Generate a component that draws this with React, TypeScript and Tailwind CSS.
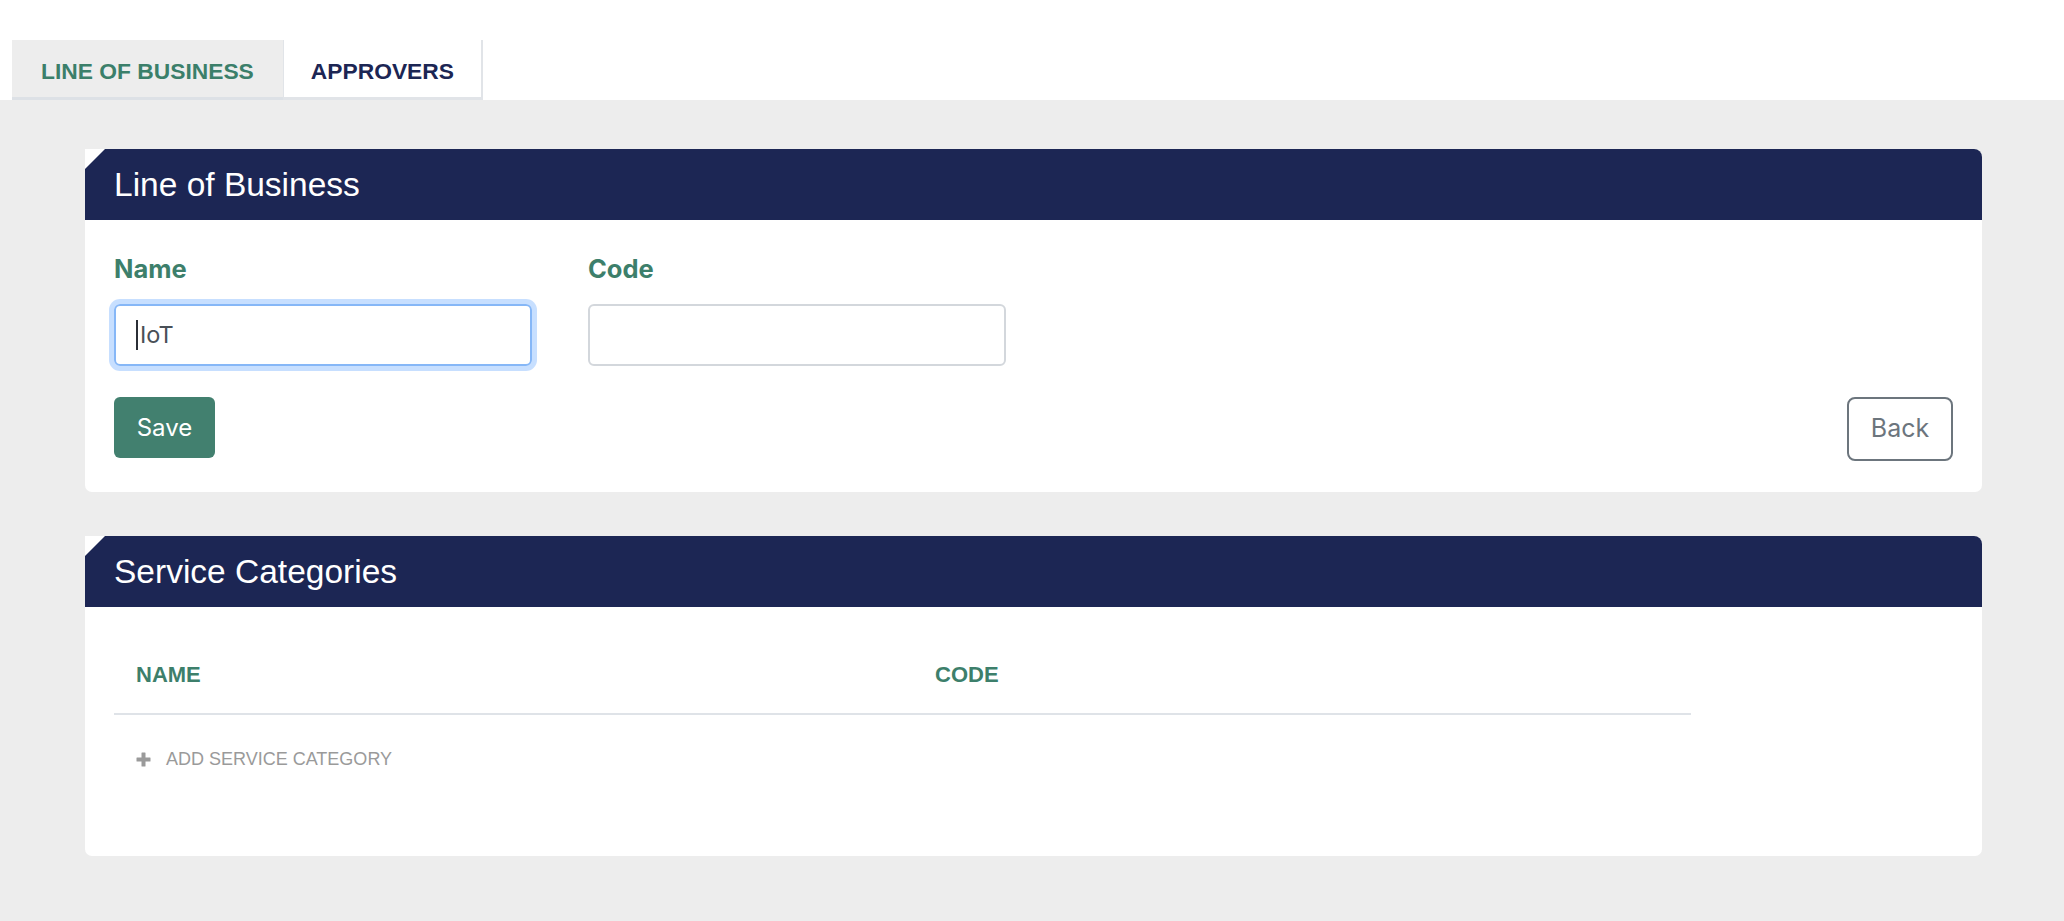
import React from "react";

const arial = "font-['Liberation_Sans',Arial,Helvetica,sans-serif]";
const sys = "font-['Inter','Noto_Sans',Arial,sans-serif]";

function CardHeader({ title }: { title: string }) {
  return (
    <div className="h-[71px] bg-[#1c2654] rounded-tr-[8px] [clip-path:polygon(20px_0,100%_0,100%_100%,0_100%,0_20px)] flex items-center pl-[29px]">
      <h2 className={`${arial} text-white text-[33.5px] leading-none`}>{title}</h2>
    </div>
  );
}

export default function App() {
  return (
    <div className="min-h-[921px] bg-[#ededed]">
      <div className="bg-white pt-[40px] pl-[12px] flex">
        <div
          className={`${arial} bg-[#ededed] text-[#3b7f6a] font-bold text-[22.8px] leading-[26px] px-[29px] pt-[18px] pb-[13px] border-b-[3px] border-[#dde1e6]`}
        >
          LINE OF BUSINESS
        </div>
        <div
          className={`${arial} bg-white text-[#1c2654] font-bold text-[22.8px] leading-[26px] px-[27px] pt-[18px] pb-[13px] border-l border-r-2 border-b-[3px] border-[#e1e4e8]`}
        >
          APPROVERS
        </div>
      </div>

      <div className="ml-[85px] mr-[82px] pt-[49px] pb-[64px] flex flex-col gap-[44px]">
        <section className="bg-white rounded-b-[7px] rounded-tr-[8px]">
          <CardHeader title="Line of Business" />
          <div className="px-[29px] pt-[34px] pb-[31px]">
            <div className="flex gap-[56px]">
              <div className="w-[418px]">
                <label className={`${sys} block text-[#3d7f6b] font-bold text-[25.5px] leading-[30px] mb-[20px]`}>
                  Name
                </label>
                <div className="h-[62px] rounded-[6px] border-2 border-[#86b7f7] shadow-[0_0_0_5px_rgba(0,110,255,0.22)] flex items-center pl-[20px]">
                  <span className="w-[2px] h-[30px] bg-[#2b2f36] mr-[2px]" />
                  <span className={`${sys} text-[23.5px] text-[#495057]`}>IoT</span>
                </div>
              </div>
              <div className="w-[418px]">
                <label className={`${sys} block text-[#3d7f6b] font-bold text-[25.5px] leading-[30px] mb-[20px]`}>
                  Code
                </label>
                <div className="h-[62px] rounded-[6px] border-2 border-[#d3d7dc] bg-white" />
              </div>
            </div>
            <div className="mt-[31px] flex justify-between items-start">
              <button className={`${sys} h-[61px] w-[101px] rounded-[6px] bg-[#42806f] text-white text-[24px]`}>
                Save
              </button>
              <button
                className={`${sys} h-[64px] w-[106px] rounded-[8px] border-2 border-[#6c757d] bg-white text-[#6c757d] text-[25px]`}
              >
                Back
              </button>
            </div>
          </div>
        </section>

        <section className="bg-white rounded-b-[7px] rounded-tr-[8px]">
          <CardHeader title="Service Categories" />
          <div className="pl-[29px] pt-[36px] pb-[86px]">
            <table className="w-[1577px] border-collapse">
              <thead>
                <tr className="border-b-2 border-[#dfe3e8]">
                  <th
                    className={`${arial} w-[799px] text-left pl-[22px] pt-[19px] pb-[25px] text-[22px] leading-[26px] font-bold text-[#3d7f6b]`}
                  >
                    NAME
                  </th>
                  <th
                    className={`${arial} text-left pl-[22px] pt-[19px] pb-[25px] text-[22px] leading-[26px] font-bold text-[#3d7f6b]`}
                  >
                    CODE
                  </th>
                </tr>
              </thead>
            </table>
            <div className="pt-[33px] pl-[22px] flex items-center">
              <svg width="15" height="15" viewBox="0 0 15 15" className="mr-[15px]">
                <rect x="5.5" y="0.5" width="4" height="14" rx="0.5" fill="#9a9a9a" />
                <rect x="0.5" y="5.5" width="14" height="4" rx="0.5" fill="#9a9a9a" />
              </svg>
              <span className={`${arial} text-[18px] leading-[22px] text-[#9a9a9a]`}>ADD SERVICE CATEGORY</span>
            </div>
          </div>
        </section>
      </div>
    </div>
  );
}
